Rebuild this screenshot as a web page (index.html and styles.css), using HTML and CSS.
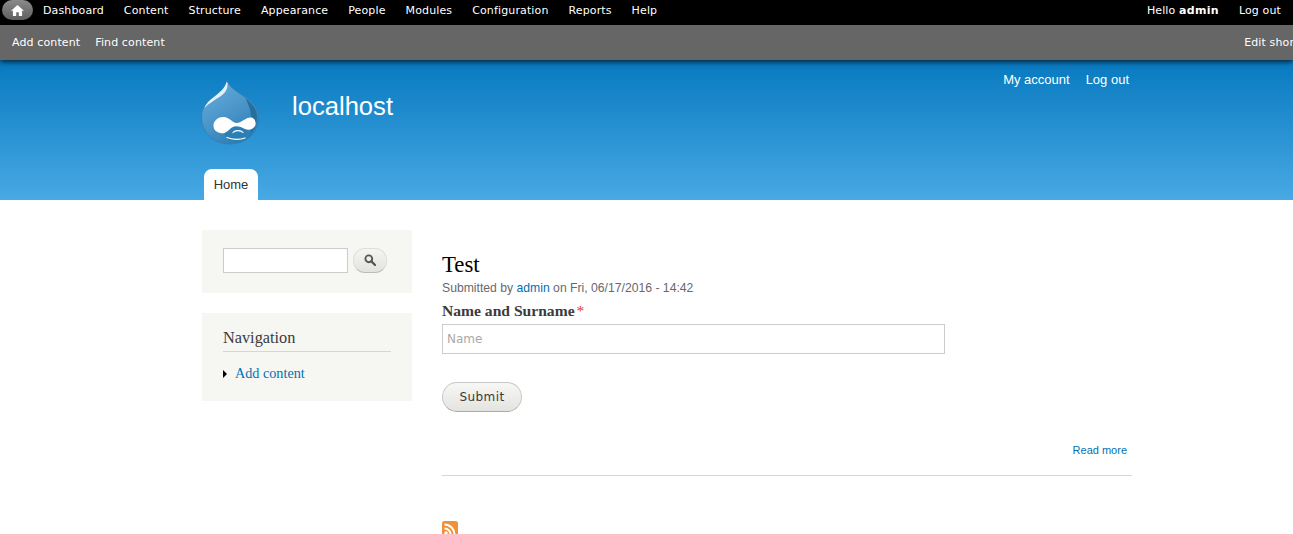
FILE: index.html
```html
<!DOCTYPE html>
<html lang="en">
<head>
<meta charset="utf-8">
<title>localhost</title>
<link rel="stylesheet" href="styles.css">
</head>
<body>
<div class="toolbar">
  <nav class="admin-menu">
    <a class="home" href="#"><svg width="13" height="11" viewBox="0 0 14 12"><path d="M7 0 L14 6.2 L12 6.2 L12 12 L8.4 12 L8.4 8 L5.6 8 L5.6 12 L2 12 L2 6.2 L0 6.2 Z" fill="#fff"/></svg></a>
    <a href="#">Dashboard</a>
    <a href="#">Content</a>
    <a href="#">Structure</a>
    <a href="#">Appearance</a>
    <a href="#">People</a>
    <a href="#">Modules</a>
    <a href="#">Configuration</a>
    <a href="#">Reports</a>
    <a href="#">Help</a>
  </nav>
  <div class="user-menu">
    <span>Hello <strong>admin</strong></span>
    <a href="#">Log out</a>
  </div>
</div>
<div class="shortcuts">
  <div class="shortcut-links">
    <a href="#">Add content</a>
    <a href="#">Find content</a>
  </div>
  <a class="edit-shortcuts" href="#">Edit shortcuts</a>
</div>
<header class="site-header">
  <div class="header-inner">
    <div class="brand">
      <svg class="logo" width="60" height="66" viewBox="0 0 60 66">
        <defs>
          <linearGradient id="drop" x1="0.2" y1="0.1" x2="0.7" y2="1">
            <stop offset="0" stop-color="#62a9d9"/>
            <stop offset="0.55" stop-color="#4792c6"/>
            <stop offset="1" stop-color="#2a7cb0"/>
          </linearGradient>
        </defs>
        <path d="M27 1 C29 8 35 11 42 16 C52 22 58.500 29 58.500 38 C58.500 54 46 65 30 65 C13 65 1.500 53 1.500 38 C1.500 28 8 21 16 16 C21 12.500 26 8 27 1 Z" fill="url(#drop)" stroke="#2f7fae" stroke-width="0.8"/>
        <path d="M26.500 3 C25 9 20 13.500 14 18 C9 21.500 6 25 4.500 29 C9 24 15 21 21 17 C25 14 28 10 27.500 4 Z" fill="#e6f2f9"/>
        <path d="M45 19 C52 24 57 30 57 38 C57 45 54 51 50 55 C53 45 52 30 45 19 Z" fill="#256f9f"/>
        <path d="M24 50 C30 46 42 46 48 50 C47 58 40 63 33 63 C27 62 24 56 24 50 Z" fill="#2b7fb4"/>
        <path d="M13.500 46 C14 41 19 37.500 24 38 C29 38.500 32 43 36 44 C41 44.500 46 38 51 38.500 C55 39 56 43 55.500 46 C54 50 49 52 45 50 C41 48 36 46 32 48.500 C29 50.500 26 54.500 22 54.300 C17 54 13 51 13.500 46 Z" fill="#fff"/>
        <path d="M27 58.500 C32 60.800 40 60.800 45 59" fill="none" stroke="#fff" stroke-width="1.300" stroke-linecap="round"/>
        <path d="M33 53.500 C35 51 41 51 43 53.500" fill="none" stroke="#fff" stroke-width="1.200" stroke-linecap="round"/>
      </svg>
      <a class="site-name" href="#">localhost</a>
    </div>
    <div class="secondary-menu">
      <a href="#">My account</a>
      <a href="#">Log out</a>
    </div>
  </div>
  <div class="tabs-row">
    <a class="tab" href="#">Home</a>
  </div>
</header>
<div class="main">
  <aside class="sidebar">
    <section class="block search-block">
      <input class="search-input" type="text" aria-label="Search">
      <button class="search-button" type="button" aria-label="Search"><svg width="12" height="12" viewBox="0 0 13 13"><circle cx="5.200" cy="5.200" r="3.700" fill="none" stroke="#555" stroke-width="2"/><path d="M8 8 L12 12" stroke="#555" stroke-width="2.400" stroke-linecap="round"/></svg></button>
    </section>
    <section class="block nav-block">
      <h2 class="block-title">Navigation</h2>
      <ul class="nav-list">
        <li><a href="#">Add content</a></li>
      </ul>
    </section>
  </aside>
  <main class="content">
    <h1 class="node-title">Test</h1>
    <p class="submitted">Submitted by <a href="#">admin</a> on Fri, 06/17/2016 - 14:42</p>
    <label class="field-label" for="name">Name and Surname<span class="req">*</span></label>
    <input class="field-input" id="name" type="text" placeholder="Name">
    <button class="submit" type="button">Submit</button>
    <div class="node-links"><a href="#">Read more</a></div>
    <div class="feed"><svg width="16" height="16" viewBox="0 0 16 16"><rect width="16" height="16" rx="2.500" fill="#f0913a"/><circle cx="4" cy="12" r="1.700" fill="#fff"/><path d="M2.500 7.500 A6 6 0 0 1 8.500 13.500 M2.500 3.500 A10 10 0 0 1 12.500 13.500" fill="none" stroke="#fff" stroke-width="2"/></svg></div>
  </main>
</div>
</body>
</html>
```
FILE: styles.css
```css
html, body {
  margin: 0;
  padding: 0;
  height: 534px;
  overflow: hidden;
  background: #fff;
}
body {
  font-family: "Liberation Sans", Arial, sans-serif;
  width: 1293px;
}
a { text-decoration: none; }

.toolbar {
  height: 25px;
  background: #000;
  display: flex;
  justify-content: space-between;
  align-items: flex-start;
  font-family: "DejaVu Sans", Verdana, sans-serif;
  font-size: 11px;
  line-height: 21px;
  letter-spacing: .13px;
  color: #fff;
}
.toolbar a { color: #fff; }
.admin-menu { display: flex; align-items: flex-start; padding-left: 2px; }
.admin-menu a { margin-right: 20px; }
.admin-menu .home {
  width: 31px;
  height: 20px;
  margin-right: 10px;
  border-radius: 10px;
  background: linear-gradient(#8a8a8a, #5f5f5f);
  display: flex;
  align-items: center;
  justify-content: center;
}
.user-menu { display: flex; gap: 20px; padding-right: 12px; }
.user-menu strong { font-weight: 700; letter-spacing: .3px; }

.shortcuts {
  height: 35px;
  background: #666;
  display: flex;
  justify-content: space-between;
  align-items: center;
  font-family: "DejaVu Sans", Verdana, sans-serif;
  font-size: 11px;
  letter-spacing: .12px;
  overflow: hidden;
  white-space: nowrap;
  position: relative;
  box-shadow: 0 2px 5px rgba(0,0,0,.7);
}
.shortcuts a { color: #fff; }
.shortcut-links { display: flex; gap: 15px; padding-left: 12px; }
.edit-shortcuts { margin-right: -29px; }

.site-header {
  height: 140px;
  background: linear-gradient(#0779bf, #48a9e4);
  display: flex;
  flex-direction: column;
}
.header-inner {
  width: 930px;
  margin-left: 202px;
  height: 109px;
  display: flex;
  justify-content: space-between;
}
.brand { display: flex; align-items: flex-start; padding-top: 19px; }
.logo { margin-left: -2px; margin-right: 32px; }
.site-name {
  color: #fff;
  font-size: 25.600px;
  line-height: 28px;
  margin-top: 13px;
}
.secondary-menu {
  display: flex;
  gap: 16px;
  padding: 12px 3px 0 0;
  font-size: 13px;
  line-height: 15px;
}
.secondary-menu a { color: #fff; }
.tabs-row {
  width: 930px;
  margin-left: 202px;
  height: 31px;
  display: flex;
  padding-left: 2px;
  box-sizing: border-box;
}
.tab {
  width: 54px;
  height: 31px;
  background: #fff;
  border-radius: 8px 8px 0 0;
  color: #333;
  font-size: 13px;
  line-height: 31px;
  text-align: center;
}

.main {
  width: 930px;
  margin-left: 202px;
  padding-top: 30px;
  display: flex;
  gap: 30px;
}
.sidebar {
  width: 210px;
  flex: none;
  display: flex;
  flex-direction: column;
  gap: 20px;
}
.block {
  background: #f6f6f2;
  box-sizing: border-box;
  padding: 0 21px;
}
.search-block {
  height: 63px;
  display: flex;
  align-items: center;
  gap: 5px;
  padding-bottom: 3px;
}
.search-input {
  width: 125px;
  height: 25px;
  box-sizing: border-box;
  border: 1px solid #ccc;
  background: #fff;
  padding: 0;
  margin: 0;
}
.search-button {
  width: 34px;
  height: 25px;
  border: 1px solid #dcdcd8;
  border-bottom-color: #bbb;
  border-radius: 12px;
  background: linear-gradient(#f5f5f3, #e2e2de);
  padding: 0;
  display: flex;
  align-items: center;
  justify-content: center;
}
.nav-block { height: 88px; padding-top: 14px; }
.block-title {
  margin: 0;
  font-family: "Liberation Serif", Georgia, serif;
  font-weight: 400;
  font-size: 16.300px;
  line-height: 22px;
  color: #3b3b3b;
  padding-bottom: 2px;
  border-bottom: 1px solid #d6d6d2;
  width: 168px;
}
.nav-list {
  list-style: none;
  margin: 12px 0 0;
  padding: 0 0 0 12px;
  font-family: "Liberation Serif", Georgia, serif;
  font-size: 14.200px;
  line-height: 18px;
  position: relative;
}
.nav-list li::before {
  content: "";
  position: absolute;
  left: 0;
  top: 6px;
  border-left: 4px solid #000;
  border-top: 4px solid transparent;
  border-bottom: 4px solid transparent;
}
.nav-list a { color: #0071b3; }

.content {
  width: 690px;
  flex: none;
  padding-top: 22px;
  box-sizing: border-box;
}
.node-title {
  margin: 0;
  font-family: "Liberation Serif", Georgia, serif;
  font-weight: 400;
  font-size: 22.800px;
  line-height: 26px;
  color: #000;
}
.submitted {
  margin: 3px 0 0;
  font-size: 12.200px;
  line-height: 14px;
  color: #68696b;
}
.submitted a { color: #0071b3; }
.field-label {
  display: block;
  margin-top: 7px;
  font-family: "Liberation Serif", Georgia, serif;
  font-weight: 700;
  font-size: 15.600px;
  line-height: 17px;
  color: #3b3b3b;
}
.req { color: #e33; font-weight: 400; margin-left: 2px; }
.field-input {
  display: block;
  width: 503px;
  height: 30px;
  box-sizing: border-box;
  margin: 5px 0 0;
  padding: 0 4px;
  border: 1px solid #ccc;
  font-family: "DejaVu Sans", Verdana, sans-serif;
  font-size: 12px;
}
.field-input::placeholder { color: #aaa; opacity: 1; }
.submit {
  display: block;
  width: 80px;
  height: 30px;
  margin-top: 28px;
  padding: 0;
  border: 1px solid #c8c8c8;
  border-bottom-color: #aaa;
  border-radius: 15px;
  background: linear-gradient(#f7f7f5, #e3e3e0);
  font-family: "DejaVu Sans", Verdana, sans-serif;
  font-size: 12px;
  letter-spacing: .4px;
  color: #3a3a3a;
}
.node-links {
  margin-top: 31px;
  padding: 0 5px 18px 0;
  border-bottom: 1px solid #d6d6d6;
  text-align: right;
  font-size: 11px;
  line-height: 14px;
}
.node-links a { color: #0071b3; }
.feed { margin-top: 45px; height: 16px; }
```
